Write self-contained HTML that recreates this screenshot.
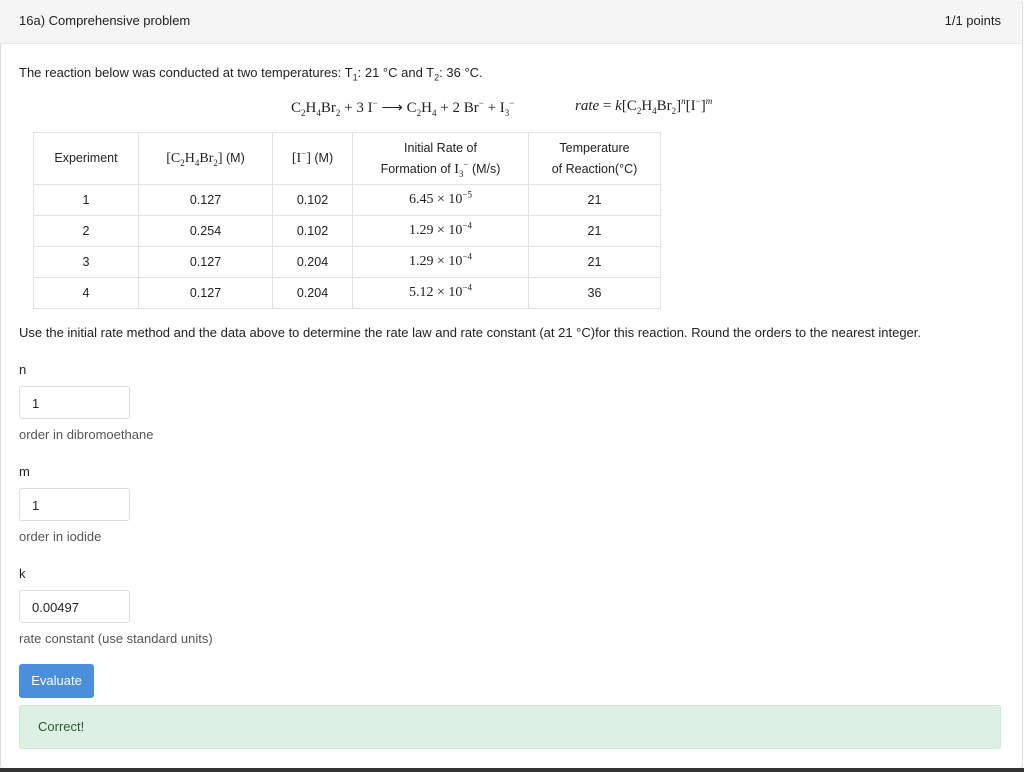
<!DOCTYPE html>
<html><head><style>
body{margin:0;width:1024px;height:772px;background:#fff;font-family:"Liberation Sans",sans-serif;font-size:13px;color:#222;position:relative;overflow:hidden}
sub,sup{line-height:0;font-size:9px}
.card{position:absolute;left:0;top:0;width:1021px;height:767px;border:1px solid #ddd;border-radius:4px;background:#fff}
.hdr{position:absolute;left:0;top:0;width:1021px;height:43px;background:#f5f5f5;border-bottom:1px solid #e8e8e8}
.a{position:absolute;white-space:nowrap}
.serif{font-family:"Liberation Serif",serif;font-size:14px}
.eq{font-size:15px}
table{position:absolute;left:33px;top:132px;border-collapse:collapse}
td{border:1px solid #e2e2e2;text-align:center;padding:0;font-size:12.5px}
tr.h td{height:51px;line-height:21px}
tr.r td{height:30px}
.inp{position:absolute;left:19px;height:33px;border:1px solid #ddd;border-radius:3px;line-height:33px;padding-left:12px;box-sizing:border-box;width:111px}
.btn{position:absolute;left:19px;top:664px;width:75px;height:34px;background:#4a8fdb;border-radius:3px;color:#fff;line-height:34px;text-align:center}
.ok{position:absolute;left:19px;top:705px;width:982px;height:44px;background:#dcf0e3;border:1px solid #cfe8d7;border-radius:3px;color:#2c5a35;line-height:42px;padding-left:18px;box-sizing:border-box}
.bot{position:absolute;left:0;top:768px;width:1024px;height:4px;background:#333}
</style></head><body>
<div class="card"></div>
<div class="hdr"></div>
<div class="a" style="left:19px;top:13px">16a) Comprehensive problem</div>
<div class="a" style="right:23px;top:13px">1/1 points</div>
<div class="a" style="left:19px;top:65px">The reaction below was conducted at two temperatures: T<sub>1</sub>: 21 °C and T<sub>2</sub>: 36 °C.</div>
<div class="a serif eq" style="left:291px;top:98px">C<sub>2</sub>H<sub>4</sub>Br<sub>2</sub> + 3 I<sup>−</sup> ⟶ C<sub>2</sub>H<sub>4</sub> + 2 Br<sup>−</sup> + I<sub>3</sub><sup>−</sup></div>
<div class="a serif eq" style="left:575px;top:98px"><i>rate</i> = <i>k</i>[C<sub>2</sub>H<sub>4</sub>Br<sub>2</sub>]<sup><i>n</i></sup>[I<sup>−</sup>]<sup><i>m</i></sup></div>
<table>
<tr class="h"><td style="width:104px">Experiment</td><td style="width:133px"><span class="serif">[C<sub>2</sub>H<sub>4</sub>Br<sub>2</sub>]</span> (M)</td><td style="width:79px"><span class="serif">[I<sup>−</sup>]</span> (M)</td><td style="width:175px">Initial Rate of<br>Formation of <span class="serif">I<sub>3</sub><sup>−</sup></span> (M/s)</td><td style="width:131px">Temperature<br>of Reaction(°C)</td></tr>
<tr class="r"><td>1</td><td>0.127</td><td>0.102</td><td class="serif">6.45 × 10<sup>−5</sup></td><td>21</td></tr>
<tr class="r"><td>2</td><td>0.254</td><td>0.102</td><td class="serif">1.29 × 10<sup>−4</sup></td><td>21</td></tr>
<tr class="r"><td>3</td><td>0.127</td><td>0.204</td><td class="serif">1.29 × 10<sup>−4</sup></td><td>21</td></tr>
<tr class="r"><td>4</td><td>0.127</td><td>0.204</td><td class="serif">5.12 × 10<sup>−4</sup></td><td>36</td></tr>
</table>
<div class="a" style="left:19px;top:325px">Use the initial rate method and the data above to determine the rate law and rate constant (at 21 °C)for this reaction.  Round the orders to the nearest integer.</div>
<div class="a" style="left:19px;top:362px">n</div>
<div class="inp" style="top:386px">1</div>
<div class="a" style="left:19px;top:427px;color:#555">order in dibromoethane</div>
<div class="a" style="left:19px;top:464px">m</div>
<div class="inp" style="top:488px">1</div>
<div class="a" style="left:19px;top:529px;color:#555">order in iodide</div>
<div class="a" style="left:19px;top:566px">k</div>
<div class="inp" style="top:590px">0.00497</div>
<div class="a" style="left:19px;top:631px;color:#555">rate constant (use standard units)</div>
<div class="btn">Evaluate</div>
<div class="ok">Correct!</div>
<div class="bot"></div>
</body></html>
